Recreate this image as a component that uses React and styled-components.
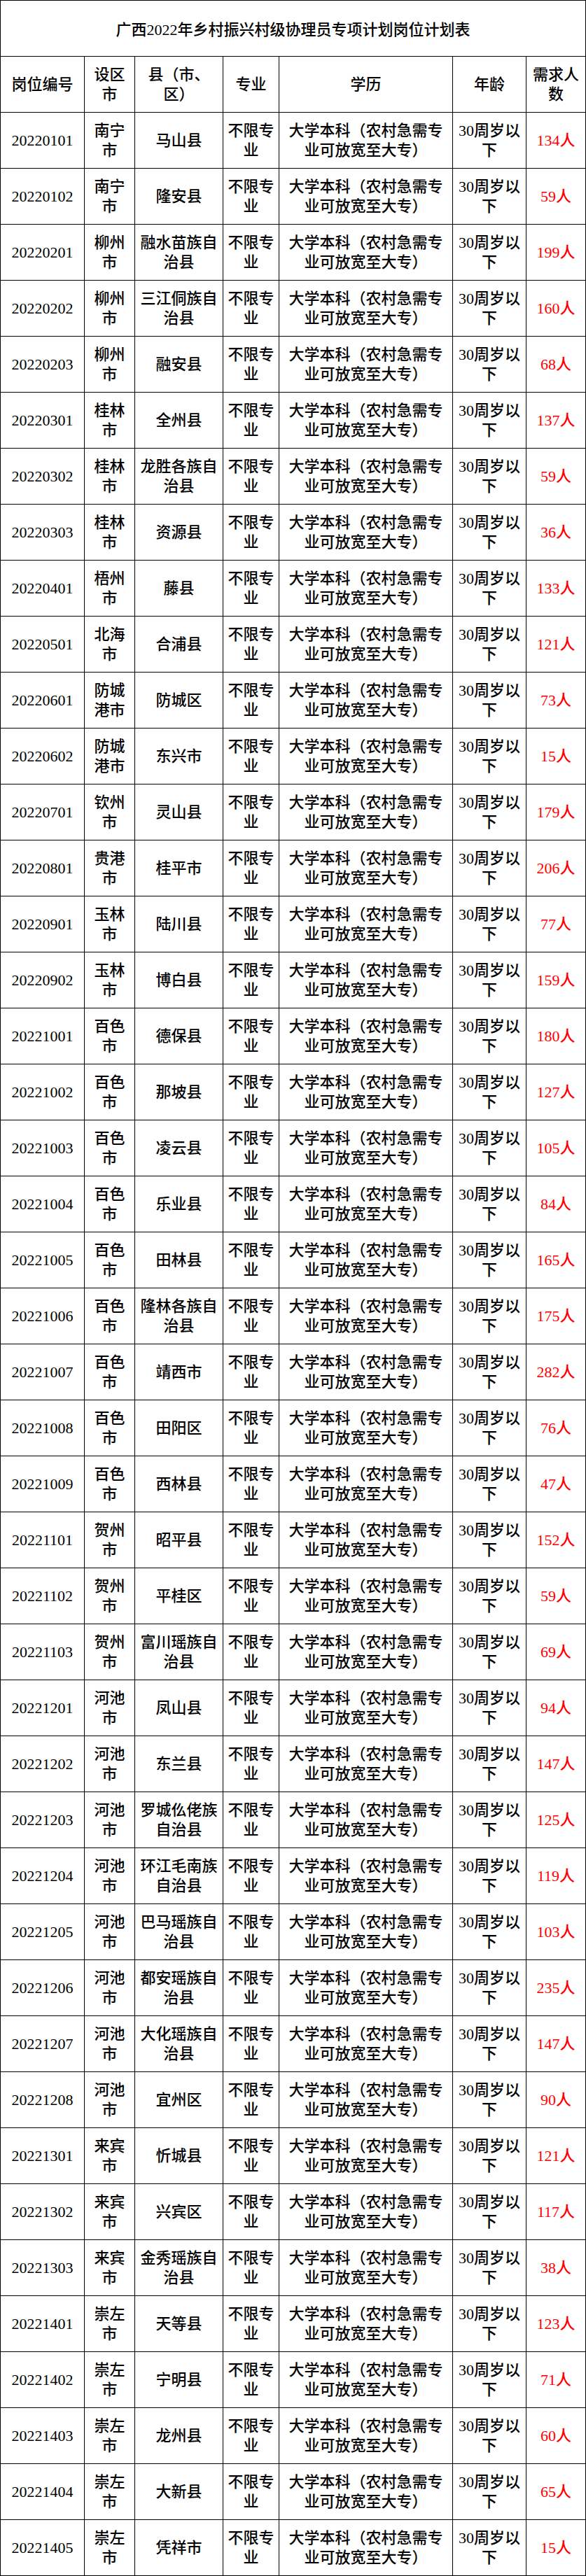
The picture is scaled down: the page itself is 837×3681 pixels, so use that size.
import React from 'react';
import styled, { createGlobalStyle } from 'styled-components';

const GlobalStyle = createGlobalStyle`
  html, body {
    margin: 0;
    padding: 0;
    background: #fff;
  }
  body {
    font-family: "Liberation Serif", "Noto Sans CJK SC", serif;
    color: #000;
  }
`;

const rows = [
  ['20220101', '南宁市', '马山县', 134],
  ['20220102', '南宁市', '隆安县', 59],
  ['20220201', '柳州市', '融水苗族自治县', 199],
  ['20220202', '柳州市', '三江侗族自治县', 160],
  ['20220203', '柳州市', '融安县', 68],
  ['20220301', '桂林市', '全州县', 137],
  ['20220302', '桂林市', '龙胜各族自治县', 59],
  ['20220303', '桂林市', '资源县', 36],
  ['20220401', '梧州市', '藤县', 133],
  ['20220501', '北海市', '合浦县', 121],
  ['20220601', '防城港市', '防城区', 73],
  ['20220602', '防城港市', '东兴市', 15],
  ['20220701', '钦州市', '灵山县', 179],
  ['20220801', '贵港市', '桂平市', 206],
  ['20220901', '玉林市', '陆川县', 77],
  ['20220902', '玉林市', '博白县', 159],
  ['20221001', '百色市', '德保县', 180],
  ['20221002', '百色市', '那坡县', 127],
  ['20221003', '百色市', '凌云县', 105],
  ['20221004', '百色市', '乐业县', 84],
  ['20221005', '百色市', '田林县', 165],
  ['20221006', '百色市', '隆林各族自治县', 175],
  ['20221007', '百色市', '靖西市', 282],
  ['20221008', '百色市', '田阳区', 76],
  ['20221009', '百色市', '西林县', 47],
  ['20221101', '贺州市', '昭平县', 152],
  ['20221102', '贺州市', '平桂区', 59],
  ['20221103', '贺州市', '富川瑶族自治县', 69],
  ['20221201', '河池市', '凤山县', 94],
  ['20221202', '河池市', '东兰县', 147],
  ['20221203', '河池市', '罗城仫佬族自治县', 125],
  ['20221204', '河池市', '环江毛南族自治县', 119],
  ['20221205', '河池市', '巴马瑶族自治县', 103],
  ['20221206', '河池市', '都安瑶族自治县', 235],
  ['20221207', '河池市', '大化瑶族自治县', 147],
  ['20221208', '河池市', '宜州区', 90],
  ['20221301', '来宾市', '忻城县', 121],
  ['20221302', '来宾市', '兴宾区', 117],
  ['20221303', '来宾市', '金秀瑶族自治县', 38],
  ['20221401', '崇左市', '天等县', 123],
  ['20221402', '崇左市', '宁明县', 71],
  ['20221403', '崇左市', '龙州县', 60],
  ['20221404', '崇左市', '大新县', 65],
  ['20221405', '崇左市', '凭祥市', 15],
];

const headers = ['岗位编号', '设区市', '县（市、区）', '专业', '学历', '年龄', '需求人数'];

const Sheet = styled.div`
  display: grid;
  grid-template-columns: 119px 71px 125px 79px 247px 104px 84px;
  grid-auto-rows: 79px;
  gap: 1px;
  padding: 1px;
  width: 837px;
  box-sizing: border-box;
  background: #000;
`;

const Cell = styled.div`
  background: #fff;
  display: flex;
  align-items: center;
  justify-content: center;
  text-align: center;
  padding: 0 4px;
  font-size: 22px;
  font-weight: 500;
  line-height: 28px;
  color: ${({ $red }) => ($red ? '#ff0000' : '#000')};
`;

const TitleCell = styled(Cell)`
  grid-column: 1 / -1;
  padding-top: 4px;
`;

export default function App() {
  return (
    <>
      <GlobalStyle />
      <Sheet>
        <TitleCell>广西2022年乡村振兴村级协理员专项计划岗位计划表</TitleCell>
        {headers.map((h) => (
          <Cell key={h}>{h}</Cell>
        ))}
        {rows.map(([id, city, county, count]) => (
          <React.Fragment key={id}>
            <Cell>{id}</Cell>
            <Cell>{city}</Cell>
            <Cell>{county}</Cell>
            <Cell>不限专业</Cell>
            <Cell>大学本科（农村急需专业可放宽至大专）</Cell>
            <Cell>30周岁以下</Cell>
            <Cell $red>{count}人</Cell>
          </React.Fragment>
        ))}
      </Sheet>
    </>
  );
}
